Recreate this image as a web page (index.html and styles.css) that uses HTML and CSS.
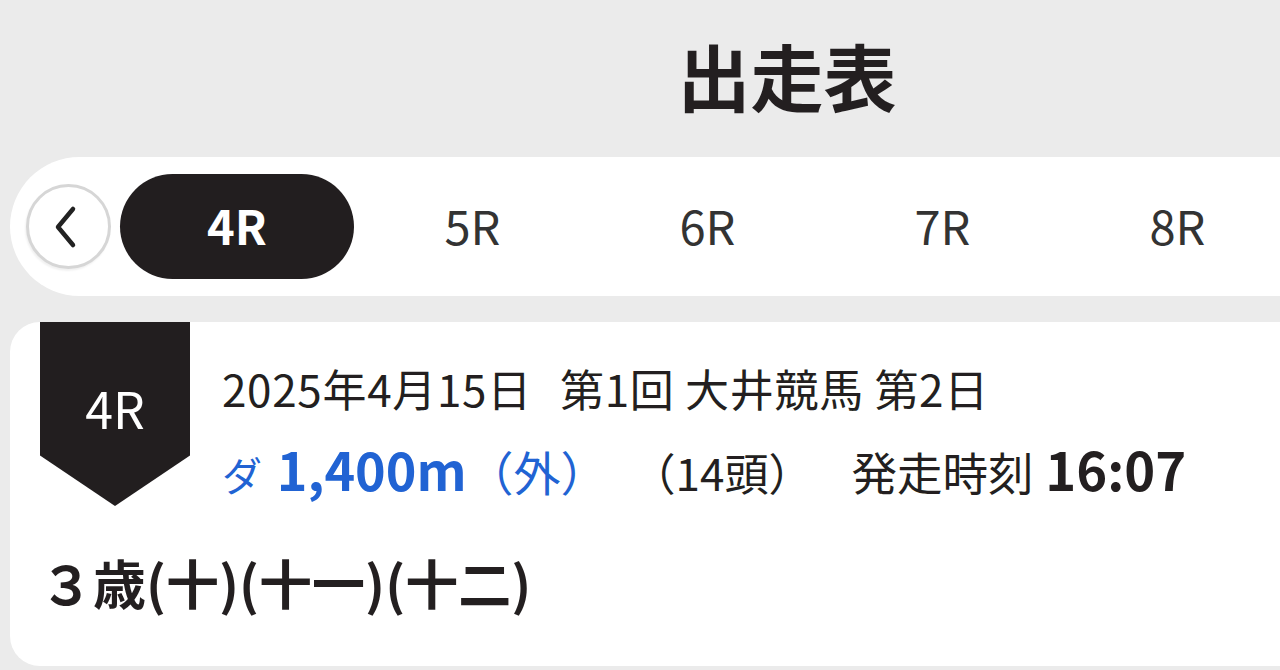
FILE: index.html
```html
<!DOCTYPE html>
<html lang="ja">
<head>
<meta charset="utf-8">
<title>出走表</title>
<link rel="stylesheet" href="styles.css">
</head>
<body>
<header class="page-head">
  <h1 class="title">出走表</h1>
</header>
<nav class="race-tabs">
  <button class="back-btn" aria-label="前へ">
    <svg width="30" height="44" viewBox="0 0 30 44"><path d="M22 4 L7 22 L22 40" fill="none" stroke="#222" stroke-width="4.5" stroke-linecap="round" stroke-linejoin="round"/></svg>
  </button>
  <a class="tab active">4R</a>
  <a class="tab">5R</a>
  <a class="tab">6R</a>
  <a class="tab">7R</a>
  <a class="tab">8R</a>
</nav>
<section class="race-card">
  <div class="race-top">
    <div class="badge"><span>4R</span></div>
    <div class="info">
      <p class="line1">2025年4月15日<span class="sp"></span>第1回 大井競馬 第2日</p>
      <p class="line2"><span class="blue da">ダ</span> <span class="blue dist">1,400m</span><span class="blue paren">（外）</span><span class="heads">（14頭）</span><span class="start-lbl">発走時刻</span> <span class="start-time">16:07</span></p>
    </div>
  </div>
  <p class="cond">３歳(十)(十一)(十二)</p>
</section>
</body>
</html>
```

FILE: styles.css
```css
* { box-sizing: border-box; }
html, body {
  margin: 0;
  padding: 0;
  background: #ebebeb;
  font-family: "Noto Sans CJK JP", "Noto Sans", sans-serif;
  color: #231f20;
  overflow: hidden;
}
.page-head {
  height: 157px;
  display: flex;
  justify-content: center;
  align-items: center;
  padding-left: 294px;
}
.title {
  margin: 0;
  font-size: 73px;
  font-weight: 700;
  line-height: 1;
  letter-spacing: 0;
  padding-bottom: 8px;
}
.race-tabs {
  margin-left: 10px;
  width: 1300px;
  height: 139px;
  background: #fff;
  border-radius: 70px 0 0 70px;
  display: flex;
  align-items: center;
  padding-left: 16px;
}
.back-btn {
  width: 85px;
  height: 85px;
  border-radius: 50%;
  border: 3px solid #d6d6d6;
  background: #fff;
  display: flex;
  align-items: center;
  justify-content: center;
  padding: 0 6px 0 0;
  margin-right: 9px;
  box-shadow: -1px 2px 2px rgba(0,0,0,0.06);
  flex: none;
}
.tab {
  flex: none;
  width: 235px;
  height: 105px;
  display: flex;
  align-items: center;
  justify-content: center;
  font-size: 47px;
  color: #333;
  border-radius: 53px;
  padding-bottom: 4px;
}
.tab.active {
  width: 234px;
  margin-right: 1px;
  background: #221e1f;
  color: #fff;
  font-weight: 700;
}
.race-card {
  margin: 26px 0 0 10px;
  width: 1300px;
  height: 344px;
  background: #fff;
  border-radius: 30px 0 0 30px;
}
.race-top {
  display: flex;
  gap: 32px;
  padding-left: 30px;
}
.badge {
  width: 150px;
  height: 184px;
  background: #221e1f;
  clip-path: polygon(0 0, 100% 0, 100% 72.5%, 50% 100%, 0 72.5%);
  display: flex;
  justify-content: center;
  padding-top: 60px;
  flex: none;
}
.badge span {
  color: #fff;
  font-size: 50px;
  line-height: 1;
}
.info {
  padding-top: 36px;
}
.info p { margin: 0; white-space: nowrap; }
.line1 {
  font-size: 44px;
  letter-spacing: 0.7px;
  line-height: 60px;
  color: #231f20;
}
.sp { display: inline-block; width: 28px; }
.line2 {
  margin-top: 20px !important;
  line-height: 60px;
  font-size: 44px;
}
.blue { color: #2163d3; }
.da { font-size: 40px; margin-right: 5px; }
.dist { font-size: 52px; font-weight: 700; }
.paren { font-size: 47px; }
.heads { margin-left: 46px; }
.start-lbl { margin-left: 39px; font-size: 45.5px; }
.start-time { font-size: 52.5px; font-weight: 700; margin-left: 2px; }
.cond {
  margin: 50px 0 0 30px;
  font-size: 53px;
  font-weight: 700;
  line-height: 1;
}
```
